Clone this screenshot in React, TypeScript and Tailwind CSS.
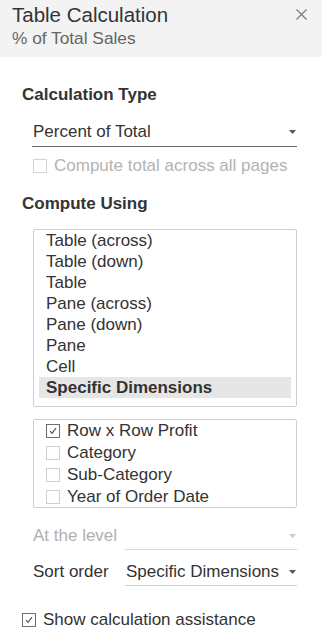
const methods = ["Table (across)", "Table (down)", "Table", "Pane (across)", "Pane (down)", "Pane", "Cell"];
const dims = [
  { name: "Row x Row Profit", on: true },
  { name: "Category", on: false },
  { name: "Sub-Category", on: false },
  { name: "Year of Order Date", on: false },
];

function Check({ on, faded }: { on: boolean; faded?: boolean }) {
  return (
    <span
      className={`w-[14px] h-[14px] border flex items-center justify-center shrink-0 ${faded ? "border-[#d4d4d4]" : on ? "border-[#6e6e6e]" : "border-[#cfcfcf]"}`}
    >
      {on && (
        <svg width="10" height="10" viewBox="0 0 10 10">
          <path d="M2 5.2 L4 7.4 L8 2.2" stroke="#555" strokeWidth="1.2" fill="none" />
        </svg>
      )}
    </span>
  );
}

function Caret({ light }: { light?: boolean }) {
  return (
    <svg width="7" height="4" viewBox="0 0 7 4" className="shrink-0">
      <path d="M0 0 L7 0 L3.5 4 Z" fill={light ? "#cccccc" : "#555555"} />
    </svg>
  );
}

export default function App() {
  return (
    <div className="w-[322px] h-[637px] bg-white text-[#333] overflow-hidden" style={{ fontFamily: "'Liberation Sans', Arial, sans-serif" }}>
      <div className="bg-[#f3f3f3] h-[57px] px-3 pt-[1px] flex justify-between">
        <div>
          <div className="text-[20.5px] leading-[27px] text-[#333]">Table Calculation</div>
          <div className="text-[17.3px] leading-[21px] text-[#666]">% of Total Sales</div>
        </div>
        <svg width="11" height="11" viewBox="0 0 11 11" className="mt-[8px] mr-[3px]">
          <path d="M0.5 0.5 L10.5 10.5 M10.5 0.5 L0.5 10.5" stroke="#777" strokeWidth="1.1" />
        </svg>
      </div>

      <div className="pl-[22px] pr-[25px]">
        <div className="mt-[28px] text-[17px] font-bold leading-[20px]">Calculation Type</div>

        <div className="ml-[10px] mt-[15px] h-[27px] border-b border-[#6a6a6a] flex items-center justify-between pr-[1px] pb-[2px]">
          <span className="text-[17px] pl-[1px]">Percent of Total</span>
          <Caret />
        </div>

        <div className="ml-[11px] mt-[9px] flex items-center gap-[7px] text-[17px] text-[#b3b3b3] leading-[20px]">
          <Check on={false} faded />
          <span>Compute total across all pages</span>
        </div>

        <div className="mt-[18px] text-[17px] font-bold leading-[20px]">Compute Using</div>

        <div className="ml-[11px] mt-[15px] h-[178px] border border-[#cfcfcf] rounded-[2px] px-[5px]">
          {methods.map((m) => (
            <div key={m} className="h-[21px] leading-[21px] text-[17px] pl-[7px]">{m}</div>
          ))}
          <div className="h-[21px] leading-[21px] text-[17px] pl-[7px] font-bold bg-[#e6e6e6]">Specific Dimensions</div>
        </div>

        <div className="ml-[11px] mt-[12px] h-[89px] border border-[#cfcfcf] rounded-[2px] pl-[12px]">
          {dims.map((d) => (
            <div key={d.name} className="h-[22px] flex items-center gap-[7px] text-[17px]">
              <Check on={d.on} />
              <span>{d.name}</span>
            </div>
          ))}
        </div>

        <div className="ml-[11px] mt-[14px] flex flex-col gap-[8px]">
          <div className="flex items-center h-[28px]">
            <span className="w-[92px] text-[17px] text-[#b0b0b0]">At the level</span>
            <div className="flex-1 h-full border-b border-[#d6d6d6] flex items-center justify-end pr-[1px]">
              <Caret light />
            </div>
          </div>
          <div className="flex items-center h-[28px]">
            <span className="w-[92px] text-[17px]">Sort order</span>
            <div className="flex-1 h-full border-b border-[#cfcfcf] flex items-center justify-between pr-[1px] pl-[1px]">
              <span className="text-[17px]">Specific Dimensions</span>
              <Caret />
            </div>
          </div>
        </div>

        <div className="mt-[24px] flex items-center gap-[7px] text-[17px] leading-[20px]">
          <Check on />
          <span>Show calculation assistance</span>
        </div>
      </div>
    </div>
  );
}
